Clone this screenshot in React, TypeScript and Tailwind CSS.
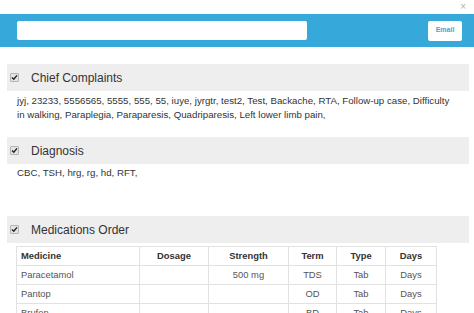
import React from "react";

const rows = [
  { name: "Paracetamol", dosage: "", strength: "500 mg", term: "TDS", type: "Tab", days: "Days" },
  { name: "Pantop", dosage: "", strength: "", term: "OD", type: "Tab", days: "Days" },
  { name: "Brufen", dosage: "", strength: "", term: "BD", type: "Tab", days: "Days" },
];

function Check() {
  return (
    <span className="w-[9px] h-[9px] bg-[#e4e4e4] border border-[#b5b5b5] rounded-[1px] flex items-center justify-center shrink-0">
      <svg width="7" height="7" viewBox="0 0 7 7">
        <path d="M1 3.6 L2.8 5.3 L6 1.4" stroke="#222" strokeWidth="1.4" fill="none" />
      </svg>
    </span>
  );
}

function SectionHead({ title }: { title: string }) {
  return (
    <div className="h-[27px] bg-[#eeeeee] flex items-center pl-[3px] gap-[12px]">
      <Check />
      <span className="text-[12px] text-[#333]">{title}</span>
    </div>
  );
}

export default function App() {
  return (
    <div
      className="w-[474px] h-[313px] overflow-hidden bg-white"
      style={{ fontFamily: '"Liberation Sans", Arial, sans-serif' }}
    >
      <div className="h-[14px] flex justify-end items-center pr-[8px] text-[10px] leading-none text-[#b0b0b0]">
        ×
      </div>
      <div className="h-[33px] bg-[#36a9da] flex items-center justify-between pl-[17px] pr-[12px]">
        <div className="w-[290px] h-[19px] bg-white rounded-[2px]" />
        <button className="w-[34px] h-[20px] bg-white rounded-[2px] text-[7px] font-bold text-[#3aa8d8] flex items-center justify-center">
          Email
        </button>
      </div>

      <div className="pl-[7px] pr-[5px] pt-[17px]">
        <section>
          <SectionHead title="Chief Complaints" />
          <p className="pl-[10px] pr-[16px] pt-[3px] text-[9.7px] leading-[14px] text-[#333]">
            jyj, 23233, 5556565, 5555, 555, 55, iuye, jyrgtr, test2, Test, Backache, RTA, Follow-up case, Difficulty in
            walking, Paraplegia, Paraparesis, Quadriparesis, Left lower limb pain,
          </p>
        </section>

        <section className="mt-[15px]">
          <SectionHead title="Diagnosis" />
          <p className="pl-[10px] pt-[2px] text-[9.7px] leading-[14px] text-[#333]">CBC, TSH, hrg, rg, hd, RFT,</p>
        </section>

        <section className="mt-[36px]">
          <SectionHead title="Medications Order" />
          <table className="mt-[3px] ml-[9px] border-collapse text-[9.4px] text-[#555]">
            <thead>
              <tr className="h-[19px] text-[#333] font-bold">
                <th className="w-[123px] border border-[#e2e2e2] text-left pl-[4px] font-bold">Medicine</th>
                <th className="w-[69px] border border-[#e2e2e2] font-bold">Dosage</th>
                <th className="w-[80px] border border-[#e2e2e2] font-bold">Strength</th>
                <th className="w-[48px] border border-[#e2e2e2] font-bold">Term</th>
                <th className="w-[49px] border border-[#e2e2e2] font-bold">Type</th>
                <th className="w-[51px] border border-[#e2e2e2] font-bold">Days</th>
              </tr>
            </thead>
            <tbody>
              {rows.map((r, i) => (
                <tr key={i} className="h-[19px]">
                  <td className="border border-[#e2e2e2] pl-[4px]">{r.name}</td>
                  <td className="border border-[#e2e2e2] text-center">{r.dosage}</td>
                  <td className="border border-[#e2e2e2] text-center">{r.strength}</td>
                  <td className="border border-[#e2e2e2] text-center">{r.term}</td>
                  <td className="border border-[#e2e2e2] text-center">{r.type}</td>
                  <td className="border border-[#e2e2e2] text-center">{r.days}</td>
                </tr>
              ))}
            </tbody>
          </table>
        </section>
      </div>
    </div>
  );
}
